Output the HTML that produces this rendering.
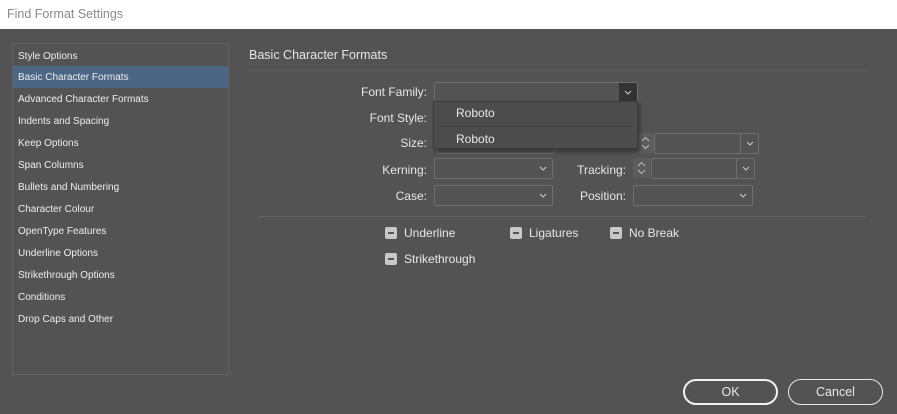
<!DOCTYPE html>
<html><head><style>
*{margin:0;padding:0;box-sizing:border-box}
body{width:897px;height:414px;background:#535353;font-family:"Liberation Sans",sans-serif;position:relative;overflow:hidden;color:#e8e8e8}
.a{position:absolute}
.title{left:0;top:0;width:897px;height:29px;background:#fff;color:#8a8a8a;font-size:12.5px;line-height:29px;padding-left:7px}
.panel{left:12px;top:43px;width:217px;height:332px;border:1px solid #626262}
.it{position:absolute;left:0;width:215px;height:22px;line-height:22px;padding-left:5px;font-size:10px;color:#eee}
.sel{background:#4b6585}
.lbl{font-size:12px;text-align:right;line-height:20px;color:#e6e6e6}
.box{border:1px solid #6e6e6e;background:#535353;border-radius:2px}
.chev{position:absolute;width:18px;height:19px}
.chev svg{position:absolute;left:5px;top:7px}
.cb{width:12px;height:12px;background:#c8c8c8;border-radius:2px}
.cb:after{content:"";position:absolute;left:3px;top:5px;width:6px;height:2px;background:#555}
.cl{font-size:12px;line-height:14px}
.sp{background:#5c5c5c;width:17px;height:20px}
</style></head><body>
<div class="a title">Find Format Settings</div>
<div class="a panel">
<div class="it" style="top:2px">Style Options</div>
<div class="it sel" style="top:22px;line-height:23px">Basic Character Formats</div>
<div class="it" style="top:45px">Advanced Character Formats</div>
<div class="it" style="top:67px">Indents and Spacing</div>
<div class="it" style="top:89px">Keep Options</div>
<div class="it" style="top:111px">Span Columns</div>
<div class="it" style="top:133px">Bullets and Numbering</div>
<div class="it" style="top:155px">Character Colour</div>
<div class="it" style="top:177px">OpenType Features</div>
<div class="it" style="top:199px">Underline Options</div>
<div class="it" style="top:221px">Strikethrough Options</div>
<div class="it" style="top:243px">Conditions</div>
<div class="it" style="top:265px">Drop Caps and Other</div>
</div>
<div class="a" style="left:249px;top:48px;font-size:12.5px;color:#e6e6e6">Basic Character Formats</div>
<div class="a" style="left:248px;top:70px;width:619px;height:1px;background:#5e5e5e"></div>
<div class="a" style="left:258px;top:216px;width:609px;height:1px;background:#626262"></div>

<div class="a lbl" style="left:300px;top:82px;width:127px">Font Family:</div>
<div class="a box" style="left:434px;top:82px;width:204px;height:21px"><div class="chev" style="right:0;top:0;background:#333"><svg width="8" height="5"><path d="M1 1L4 4L7 1" stroke="#ccc" fill="none"/></svg></div></div>
<div class="a lbl" style="left:300px;top:108px;width:127px">Font Style:</div>
<div class="a lbl" style="left:300px;top:133px;width:127px">Size:</div>
<div class="a box" style="left:437px;top:134px;width:118px;height:20px"></div>
<div class="a sp" style="left:637px;top:133px"><svg class="a" style="left:4px;top:3px" width="9" height="14"><path d="M1 5L4.5 1.5L8 5M1 9L4.5 12.5L8 9" stroke="#bbb" fill="none"/></svg></div>
<div class="a box" style="left:654px;top:133px;width:105px;height:21px"><div class="chev" style="right:0;top:0;border-left:1px solid #6e6e6e"><svg width="8" height="5"><path d="M1 1L4 4L7 1" stroke="#ccc" fill="none"/></svg></div></div>

<div class="a lbl" style="left:300px;top:160px;width:127px">Kerning:</div>
<div class="a box" style="left:434px;top:158px;width:119px;height:21px"><div class="chev" style="right:0;top:0"><svg width="8" height="5"><path d="M1 1L4 4L7 1" stroke="#ccc" fill="none"/></svg></div></div>
<div class="a lbl" style="left:530px;top:160px;width:96px">Tracking:</div>
<div class="a sp" style="left:633px;top:158px"><svg class="a" style="left:4px;top:3px" width="9" height="14"><path d="M1 5L4.5 1.5L8 5M1 9L4.5 12.5L8 9" stroke="#bbb" fill="none"/></svg></div>
<div class="a box" style="left:651px;top:158px;width:104px;height:21px"><div class="chev" style="right:0;top:0;border-left:1px solid #6e6e6e"><svg width="8" height="5"><path d="M1 1L4 4L7 1" stroke="#ccc" fill="none"/></svg></div></div>

<div class="a lbl" style="left:300px;top:186px;width:127px">Case:</div>
<div class="a box" style="left:434px;top:185px;width:119px;height:21px"><div class="chev" style="right:0;top:0"><svg width="8" height="5"><path d="M1 1L4 4L7 1" stroke="#ccc" fill="none"/></svg></div></div>
<div class="a lbl" style="left:530px;top:186px;width:96px">Position:</div>
<div class="a box" style="left:633px;top:185px;width:120px;height:21px"><div class="chev" style="right:0;top:0"><svg width="8" height="5"><path d="M1 1L4 4L7 1" stroke="#ccc" fill="none"/></svg></div></div>

<div class="a" style="left:433px;top:101px;width:205px;height:48px;background:#4c4c4c;border:1px solid #3c3c3c;box-shadow:2px 3px 4px rgba(0,0,0,.35)">
<div class="a" style="left:22px;top:4px;font-size:12px">Roboto</div>
<div class="a" style="left:6px;top:24px;width:192px;height:1px;background:#404040"></div>
<div class="a" style="left:22px;top:30px;font-size:12px">Roboto</div>
</div>

<div class="a cb" style="left:385px;top:227px"></div><div class="a cl" style="left:404px;top:226px">Underline</div>
<div class="a cb" style="left:510px;top:227px"></div><div class="a cl" style="left:529px;top:226px">Ligatures</div>
<div class="a cb" style="left:610px;top:227px"></div><div class="a cl" style="left:629px;top:226px">No Break</div>
<div class="a cb" style="left:385px;top:253px"></div><div class="a cl" style="left:404px;top:252px">Strikethrough</div>

<div class="a" style="left:683px;top:379px;width:95px;height:26px;border:2px solid #f2f2f2;border-radius:13px;text-align:center;line-height:22px;font-size:12.5px">OK</div>
<div class="a" style="left:788px;top:379px;width:95px;height:26px;border:1px solid #e8e8e8;border-radius:13px;text-align:center;line-height:24px;font-size:12.5px">Cancel</div>
</body></html>
